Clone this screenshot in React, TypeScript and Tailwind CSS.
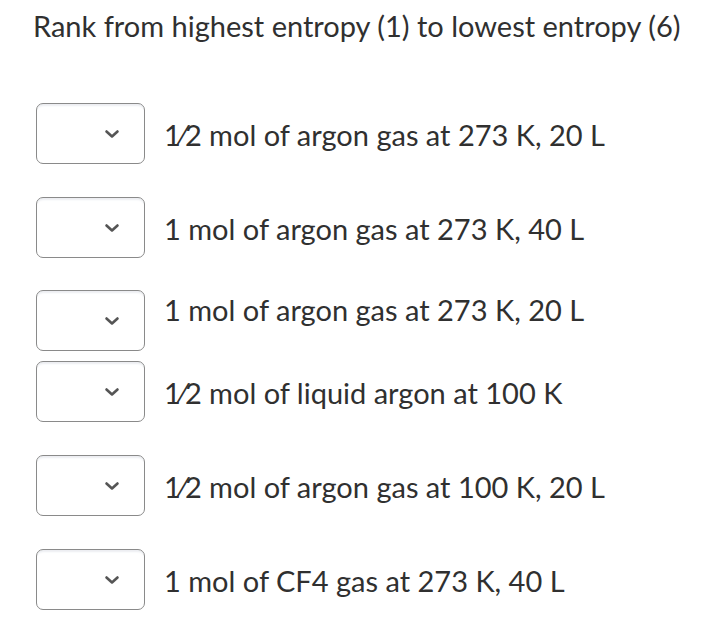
import React from "react";

type Item = { label: string; space: string; textShift: string };

const items: Item[] = [
  { label: "1⁄2 mol of argon gas at 273 K, 20 L", space: "mt-[58px]", textShift: "" },
  { label: "1 mol of argon gas at 273 K, 40 L", space: "mt-[33px]", textShift: "" },
  { label: "1 mol of argon gas at 273 K, 20 L", space: "mt-[32px]", textShift: "-translate-y-[12px]" },
  { label: "1⁄2 mol of liquid argon at 100 K", space: "mt-[10px]", textShift: "" },
  { label: "1⁄2 mol of argon gas at 100 K, 20 L", space: "mt-[33px]", textShift: "" },
  { label: "1 mol of CF4 gas at 273 K, 40 L", space: "mt-[33px]", textShift: "" },
];

const Chevron = () => (
  <svg width="16" height="10" viewBox="0 0 16 10" fill="none">
    <path d="M2.5 2.5 L8 7.5 L13.5 2.5" stroke="#555" strokeWidth="2.6" strokeLinecap="round" strokeLinejoin="round" />
  </svg>
);

const RankSelect = () => (
  <div className="w-[109px] h-[61px] shrink-0 rounded-[7px] border border-[#8a8a8a] bg-white shadow-[inset_0_3px_2px_-1px_#eceef2] flex items-center justify-end pr-[24px]">
    <Chevron />
  </div>
);

export default function App() {
  return (
    <div className="w-[706px] h-[625px] bg-white text-[#303030] font-['Lato','Noto_Sans',sans-serif] [font-feature-settings:'frac'_0,'numr'_0,'dnom'_0]">
      <h1 className="pl-[33px] pt-[7px] text-[29px] leading-[38px] font-normal">
        Rank from highest entropy (1) to lowest entropy (6)
      </h1>
      <div className="pl-[36px] flex flex-col">
        {items.map((it) => (
          <div key={it.label} className={`flex items-center gap-[19px] ${it.space}`}>
            <RankSelect />
            <span className={`text-[29px] leading-[36px] pt-[3px] ${it.textShift}`}>{it.label}</span>
          </div>
        ))}
      </div>
    </div>
  );
}
